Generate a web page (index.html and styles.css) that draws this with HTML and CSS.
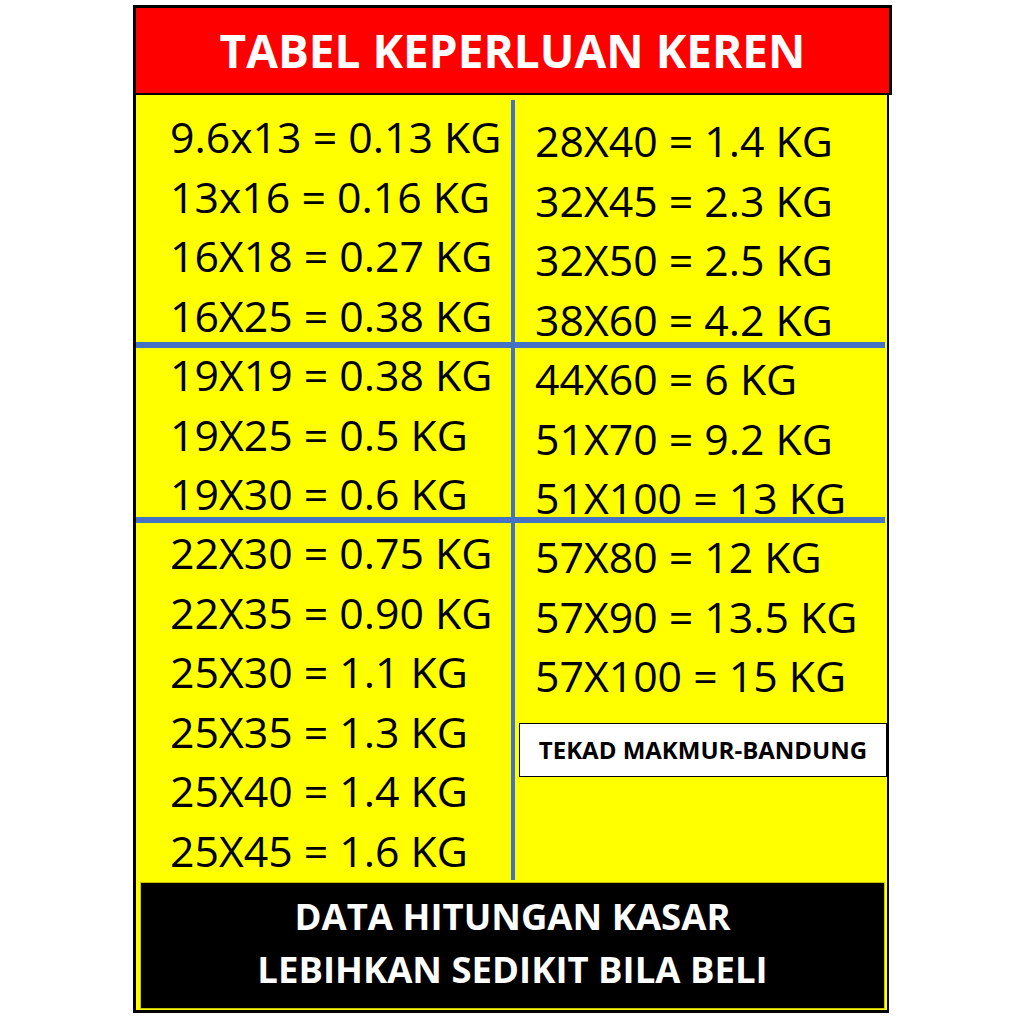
FILE: index.html
```html
<!DOCTYPE html>
<html>
<head>
<meta charset="utf-8">
<link rel="stylesheet" href="styles.css">
</head>
<body>
<div class="poster">
  <header class="head"><h1 class="title">TABEL KEPERLUAN KEREN</h1></header>
  <main class="board">
    <section class="sec sec1">
      <ul class="col left">
        <li>9.6x13 = 0.13 KG</li>
        <li>13x16 = 0.16 KG</li>
        <li>16X18 = 0.27 KG</li>
        <li>16X25 = 0.38 KG</li>
      </ul>
      <ul class="col right">
        <li>28X40 = 1.4 KG</li>
        <li>32X45 = 2.3 KG</li>
        <li>32X50 = 2.5 KG</li>
        <li>38X60 = 4.2 KG</li>
      </ul>
    </section>
    <div class="rule rule1"></div>
    <section class="sec sec2">
      <ul class="col left">
        <li>19X19 = 0.38 KG</li>
        <li>19X25 = 0.5 KG</li>
        <li>19X30 = 0.6 KG</li>
      </ul>
      <ul class="col right">
        <li>44X60 = 6 KG</li>
        <li>51X70 = 9.2 KG</li>
        <li>51X100 = 13 KG</li>
      </ul>
    </section>
    <div class="rule rule2"></div>
    <section class="sec sec3">
      <ul class="col left">
        <li>22X30 = 0.75 KG</li>
        <li>22X35 = 0.90 KG</li>
        <li>25X30 = 1.1 KG</li>
        <li>25X35 = 1.3 KG</li>
        <li>25X40 = 1.4 KG</li>
        <li>25X45 = 1.6 KG</li>
      </ul>
      <div class="col right">
        <ul class="list">
          <li>57X80 = 12 KG</li>
          <li>57X90 = 13.5 KG</li>
          <li>57X100 = 15 KG</li>
        </ul>
        <div class="brand">TEKAD MAKMUR-BANDUNG</div>
      </div>
    </section>
    <footer class="foot">
      <p>DATA HITUNGAN KASAR</p>
      <p>LEBIHKAN SEDIKIT BILA BELI</p>
    </footer>
  </main>
</div>
</body>
</html>
```
FILE: styles.css
```css
html, body {
  margin: 0;
  padding: 0;
  background: #ffffff;
}
body {
  font-family: "Open Sans", "Noto Sans", sans-serif;
}
.poster {
  width: 759px;
  margin: 5px 0 0 133px;
}
.head {
  background: #ff0000;
  border: 3px solid #000;
  border-bottom-width: 2px;
  height: 85px;
}
.title {
  margin: 0;
  color: #fff;
  font-weight: 700;
  font-size: 46px;
  line-height: 85px;
  text-align: center;
}
.board {
  width: 751px;
  background: #ffff00;
  border-left: 3px solid #000;
  border-right: 2px solid #000;
  border-bottom: 3px solid #000;
  display: flex;
  flex-direction: column;
}
.sec {
  display: grid;
  grid-template-columns: 375px 1fr;
}
ul, .list {
  list-style: none;
  margin: 0;
  padding: 0;
}
.col li {
  height: 59.5px;
  line-height: 59.5px;
  font-size: 42.8px;
  color: #000;
  white-space: nowrap;
}
.left {
  padding-left: 34px;
}
.right {
  border-left: 4px solid #4472c4;
  padding-left: 20px;
  padding-top: 4px;
  margin-bottom: -4px;
}
.sec1 .left {
  padding-top: 12px;
}
.sec1 .right {
  margin-top: 5px;
  padding-top: 11px;
}
.rule {
  height: 6px;
  background: #4472c4;
  margin-right: 2px;
  position: relative;
}
.rule1 {
  margin-top: -3px;
  margin-bottom: -3px;
}
.rule2 {
  margin-top: -6.5px;
}
.sec3 .right {
  margin-bottom: 0;
}
.brand {
  margin: 17px 0 0 -16px;
  height: 52px;
  border: 1px solid #000;
  background: #fff;
  display: flex;
  align-items: center;
  justify-content: center;
  font-weight: 700;
  font-size: 24px;
  font-stretch: 88%;
  color: #000;
}
.foot {
  margin: 1.5px 2px 1px 4px;
  border: 1px solid #c8c000;
  background: #000;
  color: #fff;
  display: flex;
  flex-direction: column;
  justify-content: center;
  align-items: center;
  padding-bottom: 4px;
  box-sizing: border-box;
  height: 127px;
}
.foot p {
  margin: 0;
  font-weight: 700;
  font-size: 36.5px;
  line-height: 53.5px;
  white-space: nowrap;
}
```
